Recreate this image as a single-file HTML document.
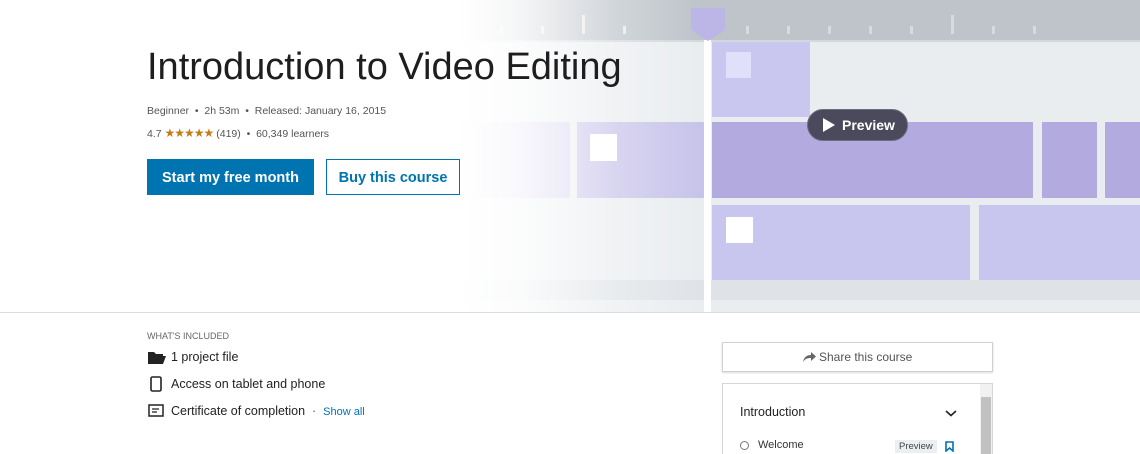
<!DOCTYPE html>
<html style="overflow:hidden;height:454px"><head><style>
*{margin:0;padding:0;box-sizing:border-box}
body{width:1140px;height:454px;overflow:hidden;background:#fff;font-family:"Liberation Sans",sans-serif;color:#222;position:relative}
.a{position:absolute}
</style></head><body>
<div class="a" style="left:460px;top:0;width:680px;height:312px;background:#eaedf0;overflow:hidden">
 <div class="a" style="left:0;top:0;width:680px;height:40px;background:#bec4ca"></div>
 <div class="a" style="left:0;top:40px;width:680px;height:2px;background:#d4d8dc"></div>
 <div class="a" style="left:40px;top:26px;width:3px;height:8px;background:#e6e8ea"></div>
 <div class="a" style="left:81px;top:26px;width:3px;height:8px;background:#e6e8ea"></div>
 <div class="a" style="left:122px;top:15px;width:3px;height:19px;background:#e6e8ea"></div>
 <div class="a" style="left:163px;top:26px;width:3px;height:8px;background:#e6e8ea"></div>
 <div class="a" style="left:286px;top:26px;width:3px;height:8px;background:#d8dbde"></div>
 <div class="a" style="left:327px;top:26px;width:3px;height:8px;background:#d8dbde"></div>
 <div class="a" style="left:368px;top:26px;width:3px;height:8px;background:#d8dbde"></div>
 <div class="a" style="left:409px;top:26px;width:3px;height:8px;background:#d8dbde"></div>
 <div class="a" style="left:450px;top:26px;width:3px;height:8px;background:#d8dbde"></div>
 <div class="a" style="left:491px;top:15px;width:3px;height:19px;background:#d8dbde"></div>
 <div class="a" style="left:532px;top:26px;width:3px;height:8px;background:#d8dbde"></div>
 <div class="a" style="left:573px;top:26px;width:3px;height:8px;background:#d8dbde"></div>
 <div class="a" style="left:252px;top:42px;width:98px;height:75px;background:#c9c6ef"></div>
 <div class="a" style="left:266px;top:52px;width:25px;height:26px;background:#e0e0fb"></div>
 <div class="a" style="left:0;top:122px;width:110px;height:76px;background:#d6d2ef"></div>
 <div class="a" style="left:117px;top:122px;width:127px;height:76px;background:#c8c3ea"></div>
 <div class="a" style="left:130px;top:134px;width:27px;height:27px;background:#fff"></div>
 <div class="a" style="left:252px;top:122px;width:321px;height:76px;background:#b3abdf"></div>
 <div class="a" style="left:582px;top:122px;width:55px;height:76px;background:#b3abdf"></div>
 <div class="a" style="left:645px;top:122px;width:40px;height:76px;background:#b3abdf"></div>
 <div class="a" style="left:252px;top:205px;width:258px;height:75px;background:#c8c5ee"></div>
 <div class="a" style="left:519px;top:205px;width:170px;height:75px;background:#c8c5ee"></div>
 <div class="a" style="left:266px;top:217px;width:27px;height:26px;background:#fff"></div>
 <div class="a" style="left:0;top:280px;width:680px;height:20px;background:#dfe3e7"></div>
 <div class="a" style="left:0;top:0;width:240px;height:312px;background:linear-gradient(to right,#fff 0%,rgba(255,255,255,.85) 25%,rgba(255,255,255,.3) 65%,rgba(255,255,255,0) 100%)"></div>
 <div class="a" style="left:244px;top:40px;width:7px;height:272px;background:#fff"></div>
 <svg class="a" style="left:231px;top:8px" width="34" height="34"><path d="M0 0H34V22L17 33L0 22Z" fill="#bcb6e6"/></svg>
 <div class="a" style="left:347px;top:109px;width:101px;height:32px;border-radius:16px;background:#4b4a5c;border:1px solid #6d6c7c;color:#fff;font-size:14px;font-weight:bold;line-height:30px;padding-left:34px">Preview</div>
 <svg class="a" style="left:363px;top:118px" width="12" height="14"><path d="M0 0L12 7L0 14Z" fill="#fff"/></svg>
</div>
<div class="a" style="left:0;top:312px;width:1140px;height:1px;background:#dcdcdc"></div>

<div class="a" style="left:147px;top:46px;font-size:38px;color:#1e1e1e;white-space:nowrap">Introduction to Video Editing</div>
<div class="a" style="left:147px;top:105px;font-size:10.5px;color:#555;white-space:nowrap">Beginner &nbsp;•&nbsp; 2h 53m &nbsp;•&nbsp; Released: January 16, 2015</div>
<div class="a" style="left:147px;top:126px;font-size:10.5px;color:#555;white-space:nowrap">4.7 <span style="color:#c37d16;font-size:12px;letter-spacing:-1px">★★★★★</span> (419) &nbsp;•&nbsp; 60,349 learners</div>
<div class="a" style="left:147px;top:159px;width:167px;height:36px;background:#0073b1;color:#fff;font-size:14.5px;font-weight:bold;text-align:center;line-height:38px">Start my free month</div>
<div class="a" style="left:326px;top:159px;width:134px;height:36px;border:1px solid #0073b1;color:#0073b1;font-size:14.5px;font-weight:bold;text-align:center;line-height:36px">Buy this course</div>

<div class="a" style="left:147px;top:331px;font-size:9px;color:#666">WHAT'S INCLUDED</div>
<svg class="a" style="left:148px;top:351px" width="18" height="13"><path d="M0 1H6L8 3H15V5H4L0 13Z M4 5H18L15 13H0Z" fill="#222"/></svg>
<div class="a" style="left:171px;top:350px;font-size:12.5px">1 project file</div>
<svg class="a" style="left:150px;top:376px" width="12" height="16"><rect x="1" y="1" width="10" height="14" rx="1.5" fill="none" stroke="#222" stroke-width="1.6"/></svg>
<div class="a" style="left:171px;top:377px;font-size:12.5px">Access on tablet and phone</div>
<svg class="a" style="left:148px;top:404px" width="16" height="13"><rect x="1" y="1" width="14" height="11" fill="none" stroke="#222" stroke-width="1.5"/><path d="M4 5H11M4 8H9" stroke="#222" stroke-width="1.3"/></svg>
<div class="a" style="left:171px;top:404px;font-size:12.5px;white-space:nowrap">Certificate of completion &nbsp;<span style="color:#555">·</span>&nbsp; <span style="color:#0073b1;font-size:11px">Show all</span></div>

<div class="a" style="left:722px;top:342px;width:271px;height:30px;border:1px solid #d0d0d0;box-shadow:0 1px 2px rgba(0,0,0,.15);text-align:center;line-height:29px;font-size:12px;color:#555">
<svg width="13" height="11" style="vertical-align:-1px"><path d="M0 11C1 6 4 4 8 4V1L13 5.5L8 10V7C4 7 2 8 0 11Z" fill="#666"/></svg> Share this course</div>
<div class="a" style="left:722px;top:383px;width:271px;height:71px;border:1px solid #d6d6d6;border-bottom:none;overflow:hidden">
 <div class="a" style="left:257px;top:0;width:12px;height:80px;background:#f1f1f1"></div>
 <div class="a" style="left:258px;top:13px;width:10px;height:70px;background:#c1c1c1"></div>
 <div class="a" style="left:17px;top:21px;font-size:12.5px;color:#222">Introduction</div>
 <svg class="a" style="left:222px;top:26px" width="12" height="7"><path d="M1 1L6 5.5L11 1" fill="none" stroke="#222" stroke-width="1.6"/></svg>
 <div class="a" style="left:17px;top:57px;width:9px;height:9px;border:1px solid #777;border-radius:50%"></div>
 <div class="a" style="left:35px;top:55px;font-size:11px;color:#333">Welcome</div>
 <div class="a" style="left:172px;top:56px;padding:0 4px;background:#eceff2;font-size:9.5px;color:#444;line-height:13px">Preview</div>
 <svg class="a" style="left:222px;top:57px" width="9" height="11"><path d="M1 1H8V10L4.5 7L1 10Z" fill="none" stroke="#0073b1" stroke-width="1.6"/></svg>
</div>
</body></html>
